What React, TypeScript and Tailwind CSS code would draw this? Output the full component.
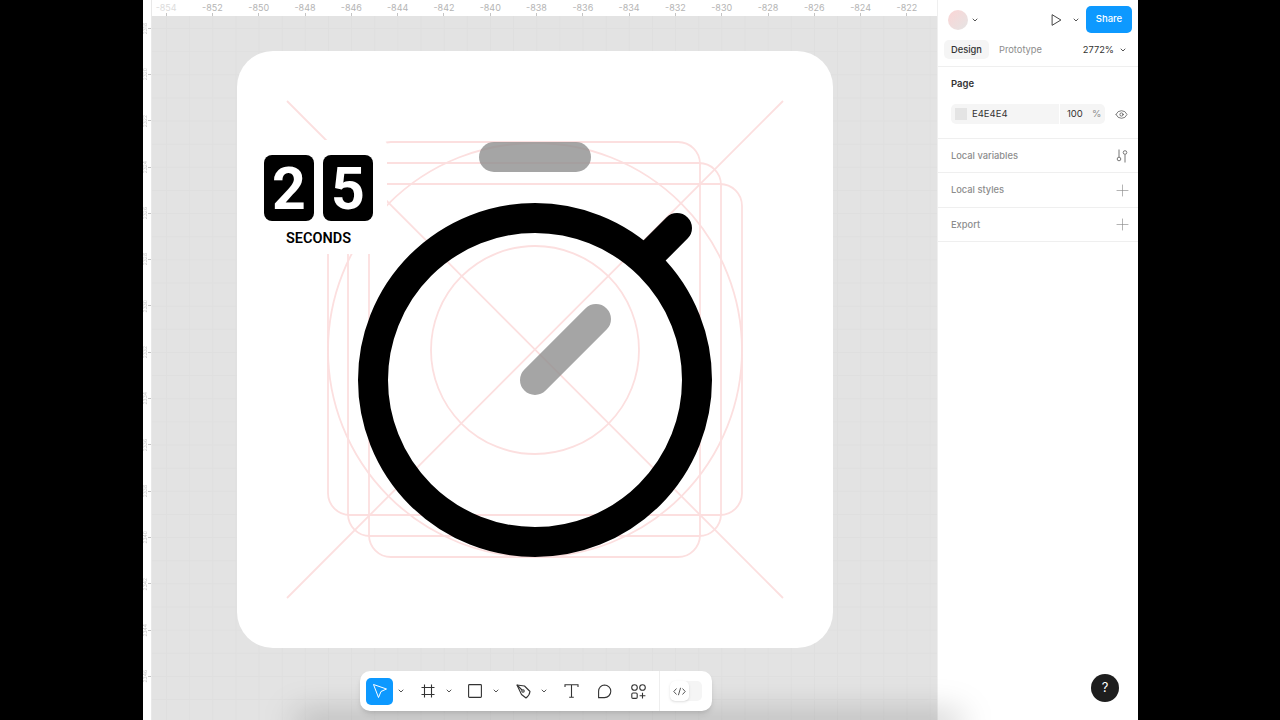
import { ChevronDown, Eye, Plus } from "lucide-react";

const topMarks = ["-854", "-852", "-850", "-848", "-846", "-844", "-842", "-840", "-838", "-836", "-834", "-832", "-830", "-828", "-826", "-824", "-822"];
const sideMarks = ["2318", "2320", "2322", "2324", "2326", "2328", "2330", "2332", "2334", "2336", "2338", "2340", "2342", "2344", "2346"];

function Chevron({ className }: { className: string }) {
    return <ChevronDown className={`w-2 h-2 text-[#333] shrink-0 ${className}`} strokeWidth={2.5} />;
}

function Rulers() {
    return (
        <div className="flex -ml-[9px] h-4 shrink-0 overflow-hidden">
            {topMarks.map((mark, i) => (
                <div key={mark} className="w-[46.3px] shrink-0 flex flex-col items-center justify-end">
                    <span className={`text-[9px] leading-[11px] ${i === 0 ? "text-[#dcdcdc]" : "text-[#b4b4b4]"}`}>{mark}</span>
                    <span className="w-px h-[3px] bg-[#c4c4c4]" />
                </div>
            ))}
        </div>
    );
}

function SideRuler() {
    return (
        <div className="w-[9px] h-full shrink-0 bg-white pt-[5px] border-r border-[#e8e8e8]">
            {sideMarks.map((mark) => (
                <div key={mark} className="h-[46.3px] flex items-center justify-between">
                    <span className="w-[5px] [writing-mode:vertical-rl] rotate-180 text-[5px] leading-[5px] text-[#c8c8c8]">{mark}</span>
                    <span className="w-[3px] h-px bg-[#c4c4c4]" />
                </div>
            ))}
        </div>
    );
}

function Guides() {
    const guide = "#fcdfdf";
    return (
        <svg className="absolute inset-0 w-full h-full" viewBox="237 51 596 597" fill="none">
            <g stroke={guide} strokeWidth="1.8">
                <line x1="287" y1="101" x2="783" y2="598" />
                <line x1="783" y1="101" x2="287" y2="598" />
                <rect x="369" y="142" width="331" height="415" rx="22" />
                <rect x="348" y="163" width="373" height="373" rx="22" />
                <rect x="328" y="184" width="414" height="331" rx="22" />
                <circle cx="535" cy="350" r="207" />
                <circle cx="535" cy="350" r="104" />
            </g>
            <rect x="258" y="140" width="129" height="114" rx="5" fill="white" />
            <rect x="479" y="142" width="112" height="30" rx="15" fill="#8f8f8f" fillOpacity="0.8" />
            <line x1="535" y1="380" x2="596" y2="319" stroke="#8f8f8f" strokeOpacity="0.8" strokeWidth="30" strokeLinecap="round" />
            <line x1="650" y1="255" x2="677" y2="228" stroke="black" strokeWidth="30" strokeLinecap="round" />
            <circle cx="535" cy="380" r="162" stroke="black" strokeWidth="30" fill="none" />
        </svg>
    );
}

function Counter() {
    return (
        <div className="absolute left-[27px] top-[104px] w-[109px] flex flex-col items-center font-['Roboto',sans-serif]">
            <div className="flex gap-[9px]">
                <div className="w-[50px] h-[66px] bg-black rounded-lg flex items-center justify-center text-white text-[59px] leading-none font-bold">2</div>
                <div className="w-[50px] h-[66px] bg-black rounded-lg flex items-center justify-center text-white text-[59px] leading-none font-bold">5</div>
            </div>
            <div className="mt-[9px] text-[14.5px] leading-[18px] font-semibold text-black">SECONDS</div>
        </div>
    );
}

function Toolbar() {
    return (
        <div className="absolute left-[208px] bottom-[9px] w-[352px] h-10 bg-white rounded-[10px] shadow-md flex items-center pl-[6px] text-[#333] z-20">
            <div className="w-[27px] h-[27px] bg-[#0d99ff] rounded-[5px] flex items-center justify-center">
                <svg width="16" height="16" viewBox="0 0 16 16" fill="none" stroke="white" strokeWidth="1">
                    <path d="M1.5 1.5 L14.5 6 L9 8.5 L6.5 14.5 Z" strokeLinejoin="round" />
                </svg>
            </div>
            <Chevron className="ml-1" />
            <div className="ml-[9px] w-7 flex justify-center">
                <svg width="14" height="14" viewBox="0 0 14 14" stroke="#333" strokeWidth="1.1" fill="none">
                    <path d="M3.5 0.5V13.5M10.5 0.5V13.5M0.5 3.5H13.5M0.5 10.5H13.5" />
                </svg>
            </div>
            <Chevron className="ml-[3px]" />
            <div className="ml-2 w-7 flex justify-center">
                <svg width="14" height="14" viewBox="0 0 14 14" stroke="#333" strokeWidth="1.1" fill="none">
                    <rect x="0.6" y="0.6" width="12.8" height="12.8" rx="0.8" />
                </svg>
            </div>
            <Chevron className="ml-[3px]" />
            <div className="ml-[9px] w-7 flex justify-center">
                <svg width="15" height="15" viewBox="0 0 15 15" stroke="#333" strokeWidth="1.1" fill="none" strokeLinejoin="round">
                    <path d="M1 1 L8.5 2 L14 7.5 Q13.5 11.5 10 14 L5.5 10.5 Z" />
                    <path d="M1 1 L6 6" />
                    <circle cx="7" cy="7" r="1.2" />
                </svg>
            </div>
            <Chevron className="ml-[3px]" />
            <div className="ml-[9px] w-7 flex justify-center">
                <svg width="15" height="14" viewBox="0 0 15 14" stroke="#333" strokeWidth="1.1" fill="none">
                    <path d="M1 3V0.8H14V3M7.5 0.8V13.2M5.2 13.2H9.8" />
                </svg>
            </div>
            <div className="ml-[5px] w-7 flex justify-center">
                <svg width="15" height="15" viewBox="0 0 15 15" stroke="#333" strokeWidth="1.1" fill="none">
                    <path d="M7.5 1A6.3 6.3 0 0 1 13.8 7.3A6.3 6.3 0 0 1 7.5 13.6H1.6V7.3A6.3 6.3 0 0 1 7.5 1Z" />
                </svg>
            </div>
            <div className="ml-[6px] w-7 flex justify-center">
                <svg width="15" height="15" viewBox="0 0 15 15" stroke="#333" strokeWidth="1.1" fill="none">
                    <circle cx="3.5" cy="3.5" r="2.8" />
                    <circle cx="11.5" cy="3.5" r="2.8" />
                    <rect x="0.8" y="9" width="5.4" height="5.4" rx="1.2" />
                    <path d="M11.5 8.8V14.6M8.6 11.7H14.4" />
                </svg>
            </div>
            <div className="ml-[7px] w-px h-10 bg-[#eeeeee]" />
            <div className="ml-[10px] w-8 h-5 bg-[#f5f5f5] rounded-[5px]">
                <div className="w-[19px] h-5 bg-white rounded-[5px] shadow flex items-center justify-center">
                    <svg width="13" height="9" viewBox="0 0 13 9" stroke="#444" strokeWidth="0.9" fill="none">
                        <path d="M3.5 1.5 L0.8 4.5 L3.5 7.5M9.5 1.5 L12.2 4.5 L9.5 7.5M7.6 0.8 L5.4 8.2" />
                    </svg>
                </div>
            </div>
        </div>
    );
}

function SideRow({ label, children }: { label: string; children: React.ReactNode }) {
    return (
        <div className="h-[34.4px] border-b border-[#efefef] flex items-center justify-between pl-[13px] pr-[10px]">
            <span className="text-[9.3px] font-medium text-[#8c8c8c]">{label}</span>
            <span className="w-3 flex justify-center text-[#888]">{children}</span>
        </div>
    );
}

function Panel() {
    return (
        <div className="relative w-[201px] h-full shrink-0 bg-white flex flex-col text-[#333] z-10 border-l border-[#efefef]">
            <div className="h-[39px] flex items-center pl-[10px] pr-[5px]">
                <div className="w-5 h-5 rounded-full bg-gradient-to-br from-[#fbd5d5] to-[#e4e4e4]" />
                <Chevron className="ml-[3px]" />
                <svg className="ml-[72px]" width="11" height="14" viewBox="0 0 12 14" fill="none" stroke="#333" strokeWidth="1">
                    <path d="M1.2 1.2 L10.8 7 L1.2 12.8 Z" strokeLinejoin="round" />
                </svg>
                <Chevron className="ml-[10px]" />
                <div className="ml-[6px] w-[46px] h-[27px] bg-[#0d99ff] rounded-[5px] flex items-center justify-center text-white text-[9.5px] font-medium">Share</div>
            </div>
            <div className="h-[28px] border-b border-[#efefef] flex items-start pl-[6px] pr-[11px] pt-px">
                <div className="w-[45px] h-[19px] bg-[#f5f5f5] rounded-[5px] flex items-center justify-center text-[9.3px] font-medium">Design</div>
                <div className="ml-[10px] h-[19px] flex items-center text-[9.3px] text-[#8c8c8c]">Prototype</div>
                <div className="ml-auto h-[19px] flex items-center text-[9.3px]">
                    2772%
                    <Chevron className="ml-[5px]" />
                </div>
            </div>
            <div className="h-[72px] border-b border-[#efefef] pl-[13px] pr-[9px]">
                <div className="h-[35px] mb-[2px] flex items-center text-[9.5px] font-semibold">Page</div>
                <div className="flex items-center">
                    <div className="w-[154px] h-5 bg-[#f5f5f5] rounded-[5px] flex items-center pl-1 text-[9.5px]">
                        <span className="w-3 h-3 bg-[#e4e4e4]" />
                        <span className="ml-[5px] w-[87px]">E4E4E4</span>
                        <span className="w-px h-5 bg-white" />
                        <span className="ml-[7px] w-[25px]">100</span>
                        <span className="text-[#8c8c8c]">%</span>
                    </div>
                    <Eye className="ml-[10px] w-[13px] h-[13px] text-[#444]" strokeWidth={1.3} />
                </div>
            </div>
            <SideRow label="Local variables">
                <svg width="12" height="14" viewBox="0 0 12 14" fill="none" stroke="#777" strokeWidth="1">
                    <path d="M3 0.5V8M9 5.5V13.5" />
                    <circle cx="3" cy="10" r="1.8" />
                    <circle cx="9" cy="3.5" r="1.8" />
                </svg>
            </SideRow>
            <SideRow label="Local styles"><Plus className="w-[19px] h-[19px] shrink-0" strokeWidth={0.8} /></SideRow>
            <SideRow label="Export"><Plus className="w-[19px] h-[19px] shrink-0" strokeWidth={0.8} /></SideRow>
            <div className="absolute left-[153px] top-[674px] w-7 h-7 rounded-full bg-[#1e1e1e] flex items-center justify-center text-white text-[13px]">?</div>
        </div>
    );
}

export default function App() {
    return (
        <div className="w-[1280px] h-[720px] overflow-hidden bg-black flex pl-[143px] pr-[142px] font-['Inter',sans-serif]">
            <div className="relative flex flex-1 h-full overflow-hidden bg-white">
                <SideRuler />
                <div className="flex-1 flex flex-col min-w-0">
                    <Rulers />
                    <div className="relative flex-1 bg-[#e3e3e3] bg-[linear-gradient(to_right,#dfdfdf_1px,transparent_1px),linear-gradient(to_bottom,#dfdfdf_1px,transparent_1px)] bg-[length:23.15px_23.15px] bg-[position:14px_12px] pl-[85px] pt-[35px]">
                        <div className="relative w-[596px] h-[597px] bg-white rounded-[36px]">
                            <Guides />
                            <Counter />
                        </div>
                        <Toolbar />
                    </div>
                </div>
                <Panel />
                <div className="absolute left-[150px] -bottom-[16px] w-[670px] h-[24px] bg-black/20 blur-lg rounded-full z-10" />
            </div>
        </div>
    );
}
